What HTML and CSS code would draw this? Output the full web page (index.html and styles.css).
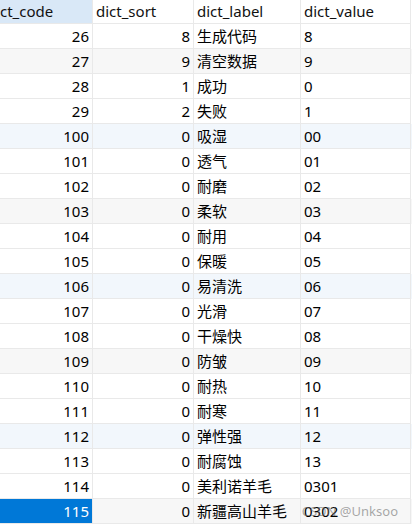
FILE: index.html
```html
<!DOCTYPE html>
<html>
<head>
<meta charset="utf-8">
<link rel="stylesheet" href="styles.css">
</head>
<body>
<div class="grid">
  <div class="row head">
    <div class="cell hd sorted">ct_code</div>
    <div class="cell hd">dict_sort</div>
    <div class="cell hd">dict_label</div>
    <div class="cell hd">dict_value</div>
  </div>
  <div class="row"><div class="cell num">26</div><div class="cell num">8</div><div class="cell">生成代码</div><div class="cell">8</div></div>
  <div class="row gray"><div class="cell num">27</div><div class="cell num">9</div><div class="cell">清空数据</div><div class="cell">9</div></div>
  <div class="row"><div class="cell num">28</div><div class="cell num">1</div><div class="cell">成功</div><div class="cell">0</div></div>
  <div class="row"><div class="cell num">29</div><div class="cell num">2</div><div class="cell">失败</div><div class="cell">1</div></div>
  <div class="row blue"><div class="cell num">100</div><div class="cell num">0</div><div class="cell">吸湿</div><div class="cell">00</div></div>
  <div class="row"><div class="cell num">101</div><div class="cell num">0</div><div class="cell">透气</div><div class="cell">01</div></div>
  <div class="row"><div class="cell num">102</div><div class="cell num">0</div><div class="cell">耐磨</div><div class="cell">02</div></div>
  <div class="row gray"><div class="cell num">103</div><div class="cell num">0</div><div class="cell">柔软</div><div class="cell">03</div></div>
  <div class="row"><div class="cell num">104</div><div class="cell num">0</div><div class="cell">耐用</div><div class="cell">04</div></div>
  <div class="row"><div class="cell num">105</div><div class="cell num">0</div><div class="cell">保暖</div><div class="cell">05</div></div>
  <div class="row blue"><div class="cell num">106</div><div class="cell num">0</div><div class="cell">易清洗</div><div class="cell">06</div></div>
  <div class="row"><div class="cell num">107</div><div class="cell num">0</div><div class="cell">光滑</div><div class="cell">07</div></div>
  <div class="row"><div class="cell num">108</div><div class="cell num">0</div><div class="cell">干燥快</div><div class="cell">08</div></div>
  <div class="row gray"><div class="cell num">109</div><div class="cell num">0</div><div class="cell">防皱</div><div class="cell">09</div></div>
  <div class="row"><div class="cell num">110</div><div class="cell num">0</div><div class="cell">耐热</div><div class="cell">10</div></div>
  <div class="row"><div class="cell num">111</div><div class="cell num">0</div><div class="cell">耐寒</div><div class="cell">11</div></div>
  <div class="row blue"><div class="cell num">112</div><div class="cell num">0</div><div class="cell">弹性强</div><div class="cell">12</div></div>
  <div class="row"><div class="cell num">113</div><div class="cell num">0</div><div class="cell">耐腐蚀</div><div class="cell">13</div></div>
  <div class="row"><div class="cell num">114</div><div class="cell num">0</div><div class="cell">美利诺羊毛</div><div class="cell">0301</div></div>
  <div class="row gray"><div class="cell num selected">115</div><div class="cell num">0</div><div class="cell">新疆高山羊毛</div><div class="cell">0302</div></div>
</div>
<div class="watermark">CSDN @Unksoo</div>
</body>
</html>
```

FILE: styles.css
```css
html, body {
  margin: 0;
  padding: 0;
  background: #ffffff;
}
body {
  width: 412px;
  height: 528px;
  overflow: hidden;
  position: relative;
  font-family: "Noto Sans", "Noto Sans CJK SC", sans-serif;
  font-size: 15px;
  color: #000000;
}
.grid {
  display: flex;
  flex-direction: column;
}
.row {
  display: grid;
  grid-template-columns: 93px 101px 107px 110px;
  height: 25px;
}
.row.head {
  height: 24px;
}
.row.gray {
  background: #f7f7f7;
}
.row.blue {
  background: #f2f7fc;
}
.cell {
  border-right: 1px solid #e9e9e9;
  border-bottom: 1px solid #e9e9e9;
  padding: 0 3px 0 3px;
  display: flex;
  align-items: center;
  white-space: nowrap;
  overflow: hidden;
  line-height: 1;
}
.hd {
  padding-left: 3px;
  color: #111111;
}
.hd.sorted {
  background: #d9e8f7;
  padding-left: 0;
}
.num {
  justify-content: flex-end;
}
.selected {
  background: #0078d7;
  color: #ffffff;
}
.watermark {
  position: absolute;
  right: 14px;
  top: 503px;
  white-space: nowrap;
  font-family: "Noto Sans", sans-serif;
  font-size: 13px;
  line-height: 16px;
  color: rgba(110, 110, 110, 0.6);
}
```
